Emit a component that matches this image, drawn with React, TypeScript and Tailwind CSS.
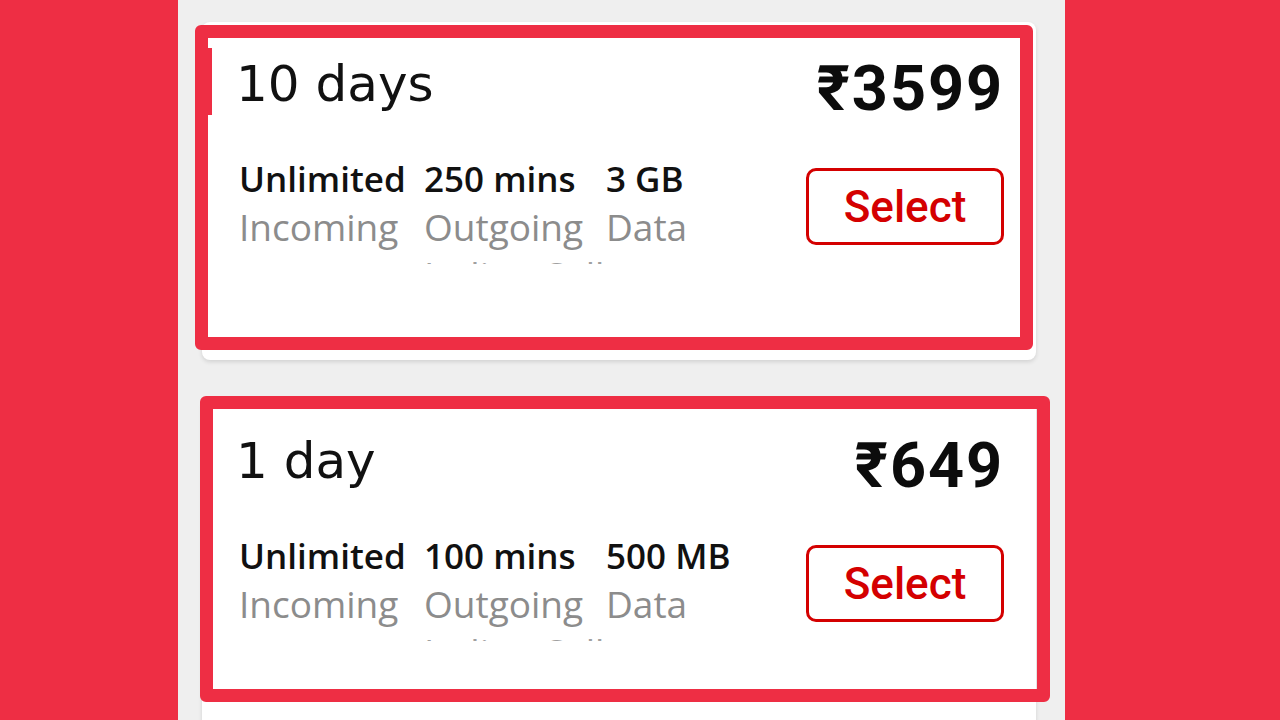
import React from "react";

interface Plan {
  id: string;
  validity: string;
  price: string;
  incoming: string;
  outgoing: string;
  data: string;
  note: string;
}

const plans: Plan[] = [
  {
    id: "p1",
    validity: "10 days",
    price: "3599",
    incoming: "Unlimited",
    outgoing: "250 mins",
    data: "3 GB",
    note: "Indian Calls",
  },
  {
    id: "p2",
    validity: "1 day",
    price: "649",
    incoming: "Unlimited",
    outgoing: "100 mins",
    data: "500 MB",
    note: "Indian Calls",
  },
];

const Benefit: React.FC<{ value: string; label: string; note?: string; width: string }> = ({
  value,
  label,
  note,
  width,
}) => (
  <div className={`flex flex-col ${width}`}>
    <span className="whitespace-nowrap text-[35px] font-semibold leading-[48px] text-[#111111]">
      {value}
    </span>
    <span className="whitespace-nowrap text-[37px] font-normal leading-[48px] text-[#8c8c8c]">
      {label}
    </span>
    {note && (
      // next line of the list, scrolled almost out of view
      <div className="h-[13px] overflow-hidden">
        <span className="block whitespace-nowrap text-[37px] leading-[48px] text-[#a0a0a0]">
          {note}
        </span>
      </div>
    )}
  </div>
);

const PlanCard: React.FC<{ plan: Plan; first: boolean }> = ({ plan, first }) => {
  return (
    <div className="relative h-[338px] shrink-0 rounded-[8px] bg-white pl-[36px] pr-[32px] shadow-[0_2px_4px_rgba(0,0,0,0.12)]">
      <div className="flex items-start justify-between">
        <h3 className="ml-[-2px] mt-[37px] text-[50px] font-normal leading-none text-[#111111] [font-family:'DejaVu_Sans',sans-serif]">
          {plan.validity}
        </h3>
        <span className="mt-[35px] text-[63px] font-bold leading-none tracking-[0.03em] text-[#0c0c0c] [font-family:Roboto,'Noto_Sans',sans-serif]">
          ₹{plan.price}
        </span>
      </div>

      <div className="mt-[35px] flex items-start justify-between">
        <div className="ml-[1px] flex">
          <Benefit value={plan.incoming} label="Incoming" width="w-[185px]" />
          <Benefit value={plan.outgoing} label="Outgoing" note={plan.note} width="w-[182px]" />
          <Benefit value={plan.data} label="Data" width="w-[180px]" />
        </div>
        <button className="mt-[13px] flex h-[77px] w-[198px] items-center justify-center rounded-[10px] border-[3px] border-[#d40000] bg-white text-[44px] font-medium text-[#d40000] [font-family:Roboto,sans-serif]">
          Select
        </button>
      </div>

      {/* red highlight drawn over the card */}
      {first ? (
        <div className="pointer-events-none absolute -left-[7px] top-[3px] bottom-[10px] right-[3px] rounded-[6px] border-[13px] border-[#ee2e44]">
          <div className="absolute left-0 top-[10px] h-[67px] w-[4px] bg-[#ee2e44]" />
        </div>
      ) : (
        <div className="pointer-events-none absolute -left-[2px] -top-[3px] bottom-[35px] -right-[14px] rounded-[6px] border-[13px] border-[#ee2e44]" />
      )}
    </div>
  );
};

const App: React.FC = () => {
  return (
    <div className="h-[720px] w-[1280px] overflow-hidden bg-[#ee2e44] [font-family:'Open_Sans',sans-serif]">
      <div className="ml-[178px] flex h-full w-[887px] flex-col gap-[39px] bg-[#efefef] pl-[24px] pr-[29px] pt-[22px]">
        {plans.map((plan, i) => (
          <PlanCard key={plan.id} plan={plan} first={i === 0} />
        ))}
      </div>
    </div>
  );
};

export default App;
